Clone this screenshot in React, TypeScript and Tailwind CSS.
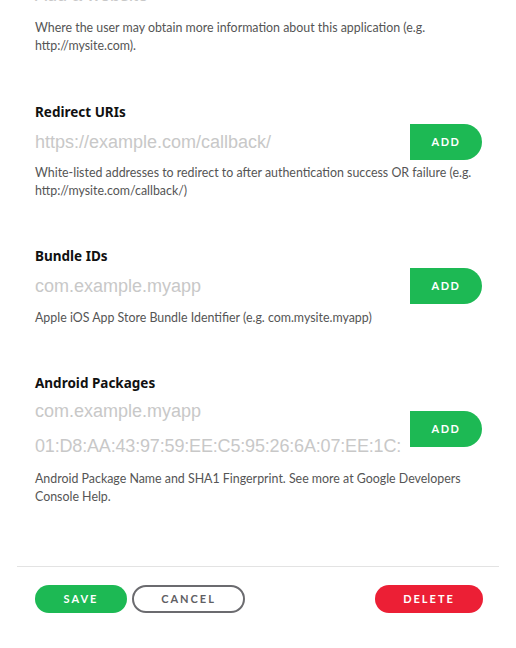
import React from "react";

const body = { fontFamily: "Lato, 'Liberation Sans', sans-serif" };
const lab = { fontFamily: "'Noto Sans', Lato, sans-serif" };
const inp = { fontFamily: "'Liberation Sans', Arial, sans-serif" };

function AddButton() {
  return (
    <button
      className="w-[72px] h-[36px] shrink-0 bg-[#1db954] rounded-r-[18px] text-white text-[11px] font-bold tracking-[1.5px]"
      style={body}
    >
      ADD
    </button>
  );
}

function Label({ children }: { children: React.ReactNode }) {
  return (
    <div className="text-[13.5px] leading-[18px] font-bold text-[#111]" style={lab}>
      {children}
    </div>
  );
}

function Desc({ children }: { children: React.ReactNode }) {
  return (
    <div className="text-[12.4px] leading-[18px] text-[#555]" style={body}>
      {children}
    </div>
  );
}

function Field({ text, tight }: { text: string; tight?: boolean }) {
  return (
    <div
      className={
        tight
          ? "h-[35px] flex items-center text-[18px] text-[#c8c8c8] whitespace-nowrap tracking-[-0.17px]"
          : "h-[35px] flex items-center text-[18px] text-[#c8c8c8] whitespace-nowrap"
      }
      style={inp}
    >
      {text}
    </div>
  );
}

export default function App() {
  return (
    <div className="w-[516px] h-[648px] bg-white overflow-hidden">
      <div className="pl-[35px] pr-[34px]">
        <div className="-mt-[17px] h-[24px] flex items-center text-[18px] text-[#c8c8c8]" style={inp}>
          Add a website
        </div>
        <div className="mt-[12px]">
          <Desc>Where the user may obtain more information about this application (e.g. http://mysite.com).</Desc>
        </div>

        <div className="mt-[48px]">
          <Label>Redirect URIs</Label>
          <div className="mt-[3px] flex items-center">
            <div className="flex-1 min-w-0 mr-[10px]">
              <Field text="https://example.com/callback/" />
            </div>
            <AddButton />
          </div>
          <div className="mt-[4px]">
            <Desc>White-listed addresses to redirect to after authentication success OR failure (e.g. http://mysite.com/callback/)</Desc>
          </div>
        </div>

        <div className="mt-[47px]">
          <Label>Bundle IDs</Label>
          <div className="mt-[3px] flex items-center">
            <div className="flex-1 min-w-0 mr-[10px]">
              <Field text="com.example.myapp" />
            </div>
            <AddButton />
          </div>
          <div className="mt-[5px]">
            <Desc>Apple iOS App Store Bundle Identifier (e.g. com.mysite.myapp)</Desc>
          </div>
        </div>

        <div className="mt-[47px]">
          <Label>Android Packages</Label>
          <div className="mt-[2px] flex items-center">
            <div className="flex-1 min-w-0 mr-[10px]">
              <Field text="com.example.myapp" />
              <Field text="01:D8:AA:43:97:59:EE:C5:95:26:6A:07:EE:1C:" tight />
            </div>
            <AddButton />
          </div>
          <div className="mt-[6px]">
            <Desc>Android Package Name and SHA1 Fingerprint. See more at Google Developers Console Help.</Desc>
          </div>
        </div>
      </div>

      <div className="mt-[60px] mx-[17px] border-t border-[#e3e3e3]" />

      <div className="mt-[18px] pl-[35px] pr-[33px] flex items-center">
        <button
          className="w-[92px] h-[28px] rounded-full bg-[#1db954] text-white text-[11px] font-bold tracking-[2px]"
          style={body}
        >
          SAVE
        </button>
        <button
          className="ml-[5px] w-[113px] h-[28px] rounded-full border-2 border-[#6b6b6f] text-[#5f6064] text-[11px] font-bold tracking-[2px]"
          style={body}
        >
          CANCEL
        </button>
        <div className="flex-1" />
        <button
          className="w-[108px] h-[28px] rounded-full bg-[#ec1f35] text-white text-[11px] font-bold tracking-[2px]"
          style={body}
        >
          DELETE
        </button>
      </div>
    </div>
  );
}
